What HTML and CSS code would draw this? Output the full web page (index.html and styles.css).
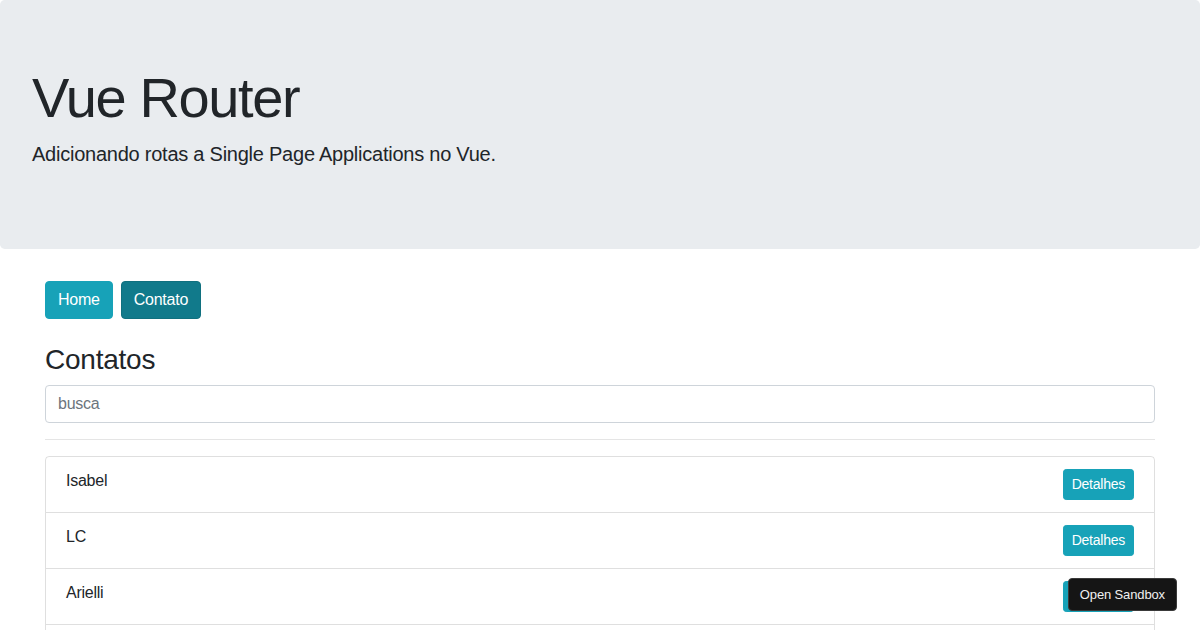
FILE: index.html
```html
<!DOCTYPE html>
<html lang="pt-BR">
<head>
    <meta charset="UTF-8">
    <title>Vue Router</title>
    <link rel="stylesheet" href="styles.css">
</head>
<body>
    <div class="jumbotron">
        <h1 class="display-title">Vue Router</h1>
        <p class="lead">Adicionando rotas a Single Page Applications no Vue.</p>
    </div>

    <div class="container">
        <nav class="nav-buttons">
            <a class="btn btn-info" href="#">Home</a>
            <a class="btn btn-info active" href="#">Contato</a>
        </nav>

        <h3 class="section-title">Contatos</h3>
        <input class="form-control" type="search" placeholder="busca">
        <hr>

        <ul class="list-group">
            <li class="list-group-item">
                <span>Isabel</span>
                <button class="btn btn-info btn-sm">Detalhes</button>
            </li>
            <li class="list-group-item">
                <span>LC</span>
                <button class="btn btn-info btn-sm">Detalhes</button>
            </li>
            <li class="list-group-item">
                <span>Arielli</span>
                <button class="btn btn-info btn-sm">Detalhes</button>
            </li>
            <li class="list-group-item">
                <span>Pedro</span>
                <button class="btn btn-info btn-sm">Detalhes</button>
            </li>
        </ul>
    </div>

    <div class="sandbox-tip">Open Sandbox</div>
</body>
</html>
```

FILE: styles.css
```css
* {
    box-sizing: border-box;
}

body {
    margin: 0;
    font-family: "Liberation Sans", Arial, sans-serif;
    font-size: 16px;
    line-height: 1.5;
    letter-spacing: -0.015em;
    color: #212529;
    background: #fff;
}

/* cabeçalho */
.jumbotron {
    padding: 64px 32px;
    margin-bottom: 32px;
    background-color: #e9ecef;
    border-radius: 4.8px;
}

.display-title {
    margin: 0 0 8px;
    font-size: 56px;
    font-weight: 400;
    line-height: 1.2;
    letter-spacing: -0.025em;
}

.lead {
    margin: 0 0 16px;
    font-size: 20px;
    font-weight: 400;
}

.container {
    width: 1140px;
    margin: 0 auto;
    padding: 0 15px;
}

/* botões */
.nav-buttons {
    display: flex;
    gap: 8px;
}

.btn {
    display: inline-block;
    padding: 6px 12px;
    font-family: inherit;
    font-size: 16px;
    line-height: 1.5;
    letter-spacing: inherit;
    color: #fff;
    text-decoration: none;
    border: 1px solid transparent;
    border-radius: 4px;
    cursor: pointer;
}

.btn-info {
    background-color: #17a2b8;
    border-color: #17a2b8;
}

.btn-info.active {
    background-color: #117a8b;
    border-color: #10707f;
}

.btn-sm {
    padding: 4px 8px;
    font-size: 14px;
    border-radius: 3.2px;
}

.section-title {
    margin: 24px 0 8px;
    font-size: 28px;
    font-weight: 400;
    line-height: 1.2;
}

.form-control {
    display: block;
    width: 100%;
    height: 38px;
    padding: 6px 12px;
    font-family: inherit;
    font-size: 16px;
    letter-spacing: inherit;
    color: #495057;
    border: 1px solid #ced4da;
    border-radius: 4px;
}

.form-control::placeholder {
    color: #6c757d;
}

hr {
    margin: 16px 0;
    border: 0;
    border-top: 1px solid rgba(0,0,0,0.1);
}

/* lista de contatos */
.list-group {
    margin: 0;
    padding: 0;
    list-style: none;
}

.list-group-item {
    display: flex;
    justify-content: space-between;
    align-items: flex-start;
    padding: 12px 20px;
    border: 1px solid rgba(0,0,0,0.125);
    border-top-width: 0;
}

.list-group-item:first-child {
    border-top-width: 1px;
    border-radius: 4px 4px 0 0;
}

/* aviso do sandbox */
.sandbox-tip {
    position: fixed;
    right: 23px;
    bottom: 19px;
    padding: 6px 11px;
    font-size: 13px;
    line-height: 19px;
    letter-spacing: -0.01em;
    color: #f0f0f0;
    background: #151515;
    border: 1px solid #3a3a3a;
    border-radius: 4px;
}
```
